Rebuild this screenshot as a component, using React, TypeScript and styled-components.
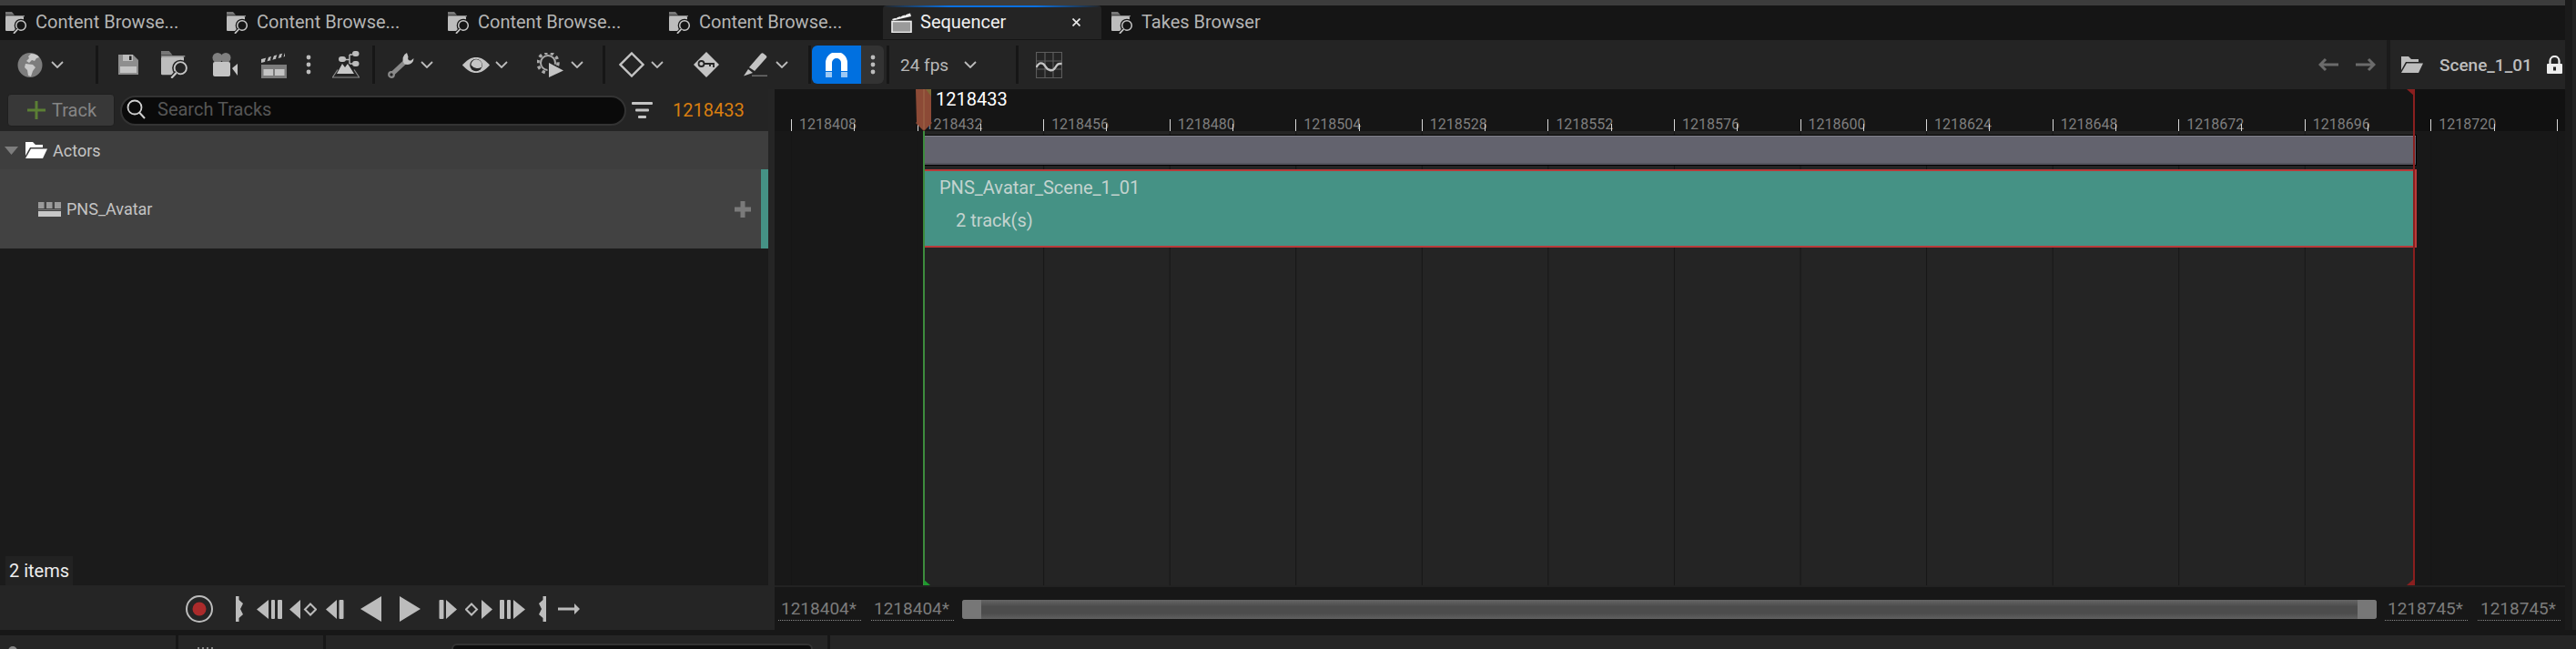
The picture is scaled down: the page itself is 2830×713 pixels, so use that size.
import React from "react";
import styled, { createGlobalStyle } from "styled-components";

const Global = createGlobalStyle`
  html, body { margin: 0; padding: 0; background: #1b1b1b; overflow: hidden; }
  * { box-sizing: border-box; }
`;

const ICON = "#bcbcbc";

const Page = styled.div`
  width: 2830px; height: 713px; overflow: hidden; display: flex; flex-direction: column;
  font-family: Roboto, "Liberation Sans", sans-serif; font-size: 20px; color: #bdbdbd; background: #1b1b1b;
`;
const Upper = styled.div`display: flex; height: 692px;`;
const Content = styled.div`width: 2818px; display: flex; flex-direction: column;`;
const Rail = styled.div`flex: 1; border-left: 8px solid #1a1a1a; background: #232323;`;
const TopEdge = styled.div`height: 6px; background: #3c3c3c;`;

const TabBar = styled.div`height: 38px; background: #151515; display: flex;`;
const Tab = styled.div<{ $w: number; $pad?: number }>`
  width: ${p => p.$w}px; padding: 0 0 0 ${p => p.$pad ?? 6}px; display: flex; align-items: center; gap: 9px;
  font-size: 20px; line-height: 24px; color: #b4b4b4; height: 37px; white-space: nowrap;
`;
const TabLabel = styled.span`position: relative; top: -1px;`;
const ActiveTab = styled(Tab)`
  background: #242424; color: #f0f0f0; position: relative; border-radius: 4px 4px 0 0;
  &::before {
    content: ""; position: absolute; left: 0; right: 0; top: 0; height: 2px;
    background: linear-gradient(90deg, transparent, #0a70e0 30%, #0a70e0 70%, transparent);
  }
`;
const CloseIcon = styled.svg`position: absolute; left: 208px; top: 14px;`;

const ToolRow = styled.div`height: 54px; display: flex; gap: 4px;`;
const Toolbar = styled.div`width: 2622px; background: #242424; display: flex; align-items: center; padding: 0 12px 0 19px;`;
const Crumbs = styled.div`flex: 1; background: #242424; display: flex; align-items: center; padding-left: 12px;`;
const CrumbName = styled.span`font-weight: 500; font-size: 19px; color: #bdbdbd; margin-left: 18px; width: 118px; white-space: nowrap;`;
const Ico = styled.svg<{ $ml?: number }>`margin-left: ${p => p.$ml ?? 0}px; flex: none; display: block;`;
const Sep = styled.div<{ $ml: number }>`margin-left: ${p => p.$ml}px; width: 3px; height: 42px; background: #161616; flex: none;`;
const Snap = styled.div`margin-left: 1px; height: 42px; display: flex; flex: none; border-radius: 6px; overflow: hidden;`;
const SnapOn = styled.div`width: 54px; background: #0070e0; display: flex; align-items: center; justify-content: center;`;
const SnapMenu = styled.div`width: 25px; background: #333; display: flex; align-items: center; justify-content: center;`;
const Fps = styled.span`margin-left: 12px; font-size: 19px; color: #b8b8b8; width: 55px; white-space: nowrap;`;
const Push = styled.div`flex: 1;`;

const Body = styled.div`flex: 1; display: flex; min-height: 0;`;
const Left = styled.div`width: 851px; display: flex; flex-direction: column; border-right: 7px solid #252525;`;
const SearchRow = styled.div`height: 46px; background: #242424; display: flex; align-items: center; padding-left: 8px; flex: none;`;
const TrackBtn = styled.div`
  width: 118px; height: 36px; background: #383838; border: 1px solid #1f1f1f; border-radius: 4px;
  display: flex; align-items: center; padding-left: 21px; gap: 7px; color: #858585; font-size: 20px;
`;
const SearchBox = styled.div`
  margin-left: 6px; width: 556px; height: 33px; border-radius: 17px; background: #0a0a0a; border: 2px solid #333;
  display: flex; align-items: center; padding: 0 0 2px 4px; gap: 11px; color: #565656; font-size: 20px;
`;
const Frame = styled.span`margin-left: 22px; color: #d97e10; font-size: 20px;`;
const FolderRow = styled.div`height: 42px; background: #3e3e3e; display: flex; align-items: center; padding-left: 5px; flex: none; font-size: 18px; color: #c4c4c4;`;
const FolderName = styled.span`margin-left: 6px;`;
const ActorRow = styled.div`
  height: 87px; background: #424242; display: flex; align-items: center; padding-left: 42px; flex: none;
  font-size: 18px; color: #c4c4c4; border-right: 8px solid #459285; padding-right: 11px;
`;
const ActorName = styled.span`margin-left: 6px; flex: 1;`;
const Empty = styled.div`flex: 1; background: #1b1b1b; display: flex; align-items: flex-end; padding-left: 6px;`;
const Items = styled.div`width: 74px; height: 32px; background: #222; color: #eee; font-size: 20px; line-height: 32px; padding-left: 4px; white-space: nowrap;`;

const Right = styled.div`flex: 1; position: relative; display: flex; flex-direction: column;`;
const Ruler = styled.div`
  height: 46px; flex: none; display: flex; padding-left: 18px;
  background: linear-gradient(90deg, #151515 0 1801px, #111 1801px);
`;
const RulerCell = styled.div`
  width: 138.57px; flex: none; height: 100%; position: relative; display: flex; align-items: flex-end;
  padding-left: 9px; color: #7e7e7e; font-size: 16px; line-height: 15px;
  &::before { content: ""; position: absolute; left: 0; bottom: 0; width: 1px; height: 13px; background: #d8d8d8; }
  &::after { content: ""; position: absolute; left: 69.3px; bottom: 0; width: 1px; height: 8px; background: #d8d8d8; }
`;
const RulerEnd = styled.div`width: 1px; height: 13px; align-self: flex-end; background: #d8d8d8; flex: none;`;
const Tracks = styled.div`
  flex: 1; padding-top: 4px; display: flex; flex-direction: column; gap: 4px;
  background:
    linear-gradient(90deg, #161616 0 1px, transparent 1px) 18px 0 / 138.57px 100% repeat-x,
    linear-gradient(90deg, #181818 0 164px, #242424 164px 1801px, #181818 1801px);
`;
const FolderBar = styled.div`
  margin-left: 164px; width: 1640px; height: 34px; background: #63636e;
  border: 1px solid #000; border-left: 0; box-shadow: inset 0 1px 0 #83838c, inset 0 -2px 0 #55555e;
  flex: none;
`;
const Clip = styled.div`
  margin-left: 164px; width: 1640px; height: 86px; background: #459285;
  border: 2px solid #b83a3a; border-left: 0;
  padding: 6px 0 0 17px; color: #c3d3cf; font-size: 20px; line-height: 24px; flex: none;
  display: flex; flex-direction: column; gap: 12px;
`;
const ClipSub = styled.div`margin-left: 18px;`;
const PlayHead = styled.svg`position: absolute; left: 154px; top: 0;`;
const PlayFrame = styled.div`position: absolute; left: 177px; top: 0; color: #fff; font-size: 20px; line-height: 22px;`;
const GreenLine = styled.div`position: absolute; left: 163px; top: 46px; bottom: 0; width: 2px; background: #3d8b3d;`;
const RedLine = styled.div`position: absolute; left: 1800px; top: 0; bottom: 0; width: 2px; background: #8a1f1f;`;
const Corner = styled.svg<{ $x: number; $bottom?: boolean }>`
  position: absolute; left: ${p => p.$x}px; ${p => (p.$bottom ? "bottom: 0;" : "top: 0;")}
`;

const BottomRow = styled.div`height: 49px; display: flex; flex: none;`;
const Transport = styled.div`width: 851px; background: #252525; display: flex; align-items: center; padding: 3px 0 0 204px;`;
const RangeBar = styled.div`
  flex: 1; background: #171717; border-top: 2px solid #222; display: flex; align-items: flex-start;
  padding: 13px 5px 0 4px;
`;
const Num = styled.div<{ $ml?: number }>`
  width: 91px; margin-left: ${p => p.$ml ?? 0}px; height: 24px; line-height: 22px; font-size: 19px; color: #7c7c7c;
  border-bottom: 1px dotted #8a8a8a; padding-left: 3px; white-space: nowrap; flex: none;
`;
const Scroll = styled.div`
  flex: 1; margin: 1px 9px 0 9px; height: 21px; border-radius: 3px; overflow: hidden; display: flex; justify-content: space-between;
  background: linear-gradient(180deg, #666 0, #4c4c4c 35%, #4c4c4c 70%, #606060 100%);
`;
const ScrollCap = styled.div`width: 21px; background: #777;`;

const Gutter = styled.div`height: 6px; background: #171717; flex: none;`;
const Footer = styled.div`flex: 1; display: flex; background: #252525; overflow: hidden;`;
const FootCell = styled.div<{ $w: number }>`
  width: ${p => p.$w}px; flex: none; border-right: 3px solid #171717; position: relative; display: flex; padding-top: 9px;
`;
const FootInput = styled.div`
  margin-left: 138px; width: 397px; height: 20px; background: #0d0d0d; border: 2px solid #333; border-radius: 6px 6px 0 0;
`;
const FootDot = styled.div`margin-left: 9px; margin-top: 3px; width: 10px; height: 10px; border-radius: 50%; background: #888;`;
const FootBars = styled.div`margin-left: 21px; margin-top: 4px; width: 18px; height: 8px; background: repeating-linear-gradient(90deg, #888 0 2px, transparent 2px 5px);`;

type P = { ml?: number };
const Chevron = ({ ml }: P) => (
  <Ico $ml={ml} width={14} height={8} viewBox="0 0 14 8"><path d="M1 1l6 6 6-6" fill="none" stroke={ICON} strokeWidth={1.8} /></Ico>
);
const FolderSearch = ({ size = 24, ml, bg = "#151515" }: P & { size?: number; bg?: string }) => (
  <Ico $ml={ml} width={size} height={size} viewBox="0 0 24 24">
    <path d="M0 0h7l3 3.5H0z" fill="#777" />
    <rect y="4" width="21" height="1.2" fill="#8a8a8a" />
    <rect y="5" width="20" height="16" rx="1" fill="#bdbdbd" />
    <circle cx="17" cy="15" r="7.3" fill={bg} />
    <circle cx="17" cy="15" r="5.3" fill="none" stroke="#c8c8c8" strokeWidth="1.5" />
    <path d="M13.5 19l-4.500 5" stroke={bg} strokeWidth="4" />
    <path d="M13.500 19l-4.500 4.800" stroke="#c8c8c8" strokeWidth="1.800" />
  </Ico>
);
const Clapper = () => (
  <Ico width={23} height={23} viewBox="0 0 23 23">
    <path d="M1 8L21 1.5l1 3.5L2 9.5z" fill="#eee" />
    <path d="M5 6.8l2-2.6M10 5.2l2-2.6M15 3.6l2-2.6" stroke="#222" strokeWidth="1.6" />
    <rect x="1" y="10.5" width="21" height="12" fill="#9a9a9a" stroke="#eee" strokeWidth="1.6" />
  </Ico>
);
const FolderOpen = ({ color, ml }: P & { color: string }) => (
  <Ico $ml={ml} width={24} height={18} viewBox="0 0 24 18">
    <path d="M0 0h8l3 3h8v3H5L0 15z" fill={color} />
    <path d="M6 7.5h18L19 18H0z" fill={color} />
  </Ico>
);

const Globe = () => (
  <Ico width={28} height={27} viewBox="0 0 28 27">
    <circle cx="14" cy="13.5" r="13.5" fill="#7d7d7d" />
    <path d="M15 1c4 0 7 1 9 4l-3 1-2 3-3-1-3 3-3-2 3-3-1-2zM9 12l8 1 3 3-3 4-2 6-3-1-1-6-3-3z" fill="#c9c9c9" />
  </Ico>
);
const Save = ({ ml }: P) => (
  <Ico $ml={ml} width={22} height={22} viewBox="0 0 22 22">
    <path d="M0 0h16l6 6v16H0z" fill="#8e8e8e" />
    <rect x="2" y="13" width="18" height="7" fill="#c4c4c4" />
    <rect x="5" y="0" width="11" height="7" fill="#bdbdbd" />
    <rect x="12" y="1.5" width="2.5" height="4.5" fill="#242424" />
  </Ico>
);
const Camera = ({ ml }: P) => (
  <Ico $ml={ml} width={28} height={26} viewBox="0 0 28 26">
    <circle cx="6" cy="5.5" r="5.5" fill="#808080" /><circle cx="15" cy="5.5" r="5.5" fill="#808080" />
    <rect x="1" y="10" width="19" height="16" rx="2" fill="#c4c4c4" />
    <path d="M22 17l6-5v13z" fill="#c4c4c4" />
  </Ico>
);
const ClapperTool = ({ ml }: P) => (
  <Ico $ml={ml} width={29} height={29} viewBox="0 0 29 29">
    <path d="M1 8L27 1v4L1 12z" fill="#bdbdbd" />
    <path d="M6 11l2-6M12 9l2-6M18 8l2-6M24 6l2-6" stroke="#242424" strokeWidth="2.4" />
    <rect x="1" y="14" width="28" height="15" fill="#7c7c7c" />
    <rect x="3.5" y="19" width="10.5" height="7" fill="#c4c4c4" /><rect x="16" y="19" width="10.5" height="7" fill="#c4c4c4" />
  </Ico>
);
const Dots = ({ ml }: P) => (
  <Ico $ml={ml} width={6} height={22} viewBox="0 0 6 22">
    <circle cx="3" cy="3" r="2.4" fill={ICON} /><circle cx="3" cy="11" r="2.4" fill={ICON} /><circle cx="3" cy="19" r="2.4" fill={ICON} />
  </Ico>
);
const Tree = ({ ml }: P) => (
  <Ico $ml={ml} width={30} height={30} viewBox="0 0 30 30">
    <path d="M14 9.5h5M19 4v10M19 4h3M19 14h3" stroke="#bdbdbd" strokeWidth="1.4" fill="none" />
    <rect x="7" y="6" width="8" height="6" rx="3" fill="#bdbdbd" />
    <rect x="22" y="0" width="7.5" height="6" rx="3" fill="#bdbdbd" /><rect x="22" y="11" width="7.5" height="6" rx="3" fill="#bdbdbd" />
    <path d="M5 25l6-11 3 4 3-4 7 11z" fill="#c8c8c8" />
    <path d="M0 29.5l6-9M30 29.5l-6-9M0 29h30" stroke="#8a8a8a" strokeWidth="1.2" fill="none" />
  </Ico>
);
const Wrench = ({ ml }: P) => (
  <Ico $ml={ml} width={29} height={29} viewBox="0 0 29 29">
    <path d="M4 25L19 11" stroke="#8a8a8a" strokeWidth="5" />
    <circle cx="4" cy="25" r="2.8" fill="#242424" stroke="#8a8a8a" strokeWidth="2.2" />
    <path d="M21 1a8 8 0 0 0-3 12c3 2 8 1 10-3l.5-3-3 2.5c-3 .5-4-2-3-4z" fill="#c4c4c4" />
  </Ico>
);
const Eye = ({ ml }: P) => (
  <Ico $ml={ml} width={30} height={17} viewBox="0 0 30 17">
    <path d="M0 8.5C5 2.5 10 0 15 0s10 2.5 15 8.5C25 14.5 20 17 15 17S5 14.5 0 8.5z" fill="#c4c4c4" />
    <circle cx="15" cy="8.5" r="6.8" fill="#242424" />
    <path d="M9.5 8.5a6 6 0 1 1 11.5 2.2A9 9 0 0 1 9.5 8.5z" fill="#c4c4c4" />
  </Ico>
);
const GearPlay = ({ ml }: P) => (
  <Ico $ml={ml} width={29} height={27} viewBox="0 0 29 27">
    <circle cx="12" cy="11" r="8" fill="none" stroke="#aaa" strokeWidth="2" />
    <circle cx="12" cy="11" r="11" fill="none" stroke="#aaa" strokeWidth="3.4" strokeDasharray="3.4 3.4" />
    <path d="M13 11v16l16-7.5z" fill="#242424" stroke="#242424" strokeWidth="3" />
    <path d="M13 11v16l16-7.5z" fill="#c4c4c4" />
  </Ico>
);
const Diamond = ({ ml }: P) => (
  <Ico $ml={ml} width={28} height={28} viewBox="0 0 28 28">
    <path d="M14 1.5L26.5 14 14 26.5 1.5 14z" fill="none" stroke="#c4c4c4" strokeWidth="2.4" />
  </Ico>
);
const KeyDiamond = ({ ml }: P) => (
  <Ico $ml={ml} width={28} height={28} viewBox="0 0 28 28">
    <path d="M14 0l14 14-14 14L0 14z" fill="#c4c4c4" />
    <circle cx="8.5" cy="13" r="3" fill="none" stroke="#242424" strokeWidth="1.8" />
    <path d="M11.5 13H22v4M18 13v3" stroke="#242424" strokeWidth="1.8" fill="none" />
  </Ico>
);
const Pencil = ({ ml }: P) => (
  <Ico $ml={ml} width={26} height={26} viewBox="0 0 26 26">
    <path d="M6 16L19 1a2 2 0 0 1 3 0l2.5 2a2 2 0 0 1 0 3L12 20z" fill="#c4c4c4" />
    <path d="M5 18l5 4-10 3.5z" fill="#c4c4c4" />
    <rect x="9" y="24.5" width="17" height="1.5" fill="#6e6e6e" />
  </Ico>
);
const Magnet = () => (
  <Ico width={24} height={27} viewBox="0 0 24 27">
    <path d="M3.5 20V11a8.500 8.500 0 0 1 17 0v9" fill="none" stroke="#fff" strokeWidth="7" />
    <rect x="0" y="21" width="7" height="6" fill="#9cc8f4" /><rect x="17" y="21" width="7" height="6" fill="#9cc8f4" />
  </Ico>
);
const Graph = ({ ml }: P) => (
  <Ico $ml={ml} width={29} height={29} viewBox="0 0 29 29">
    <path d="M.5.5h28v28H.5zM10 .5v28M19 .5v28M.5 10h28M.5 19h28" fill="none" stroke="#5c5c5c" strokeWidth="1.2" />
    <path d="M.5 17c3-6 7-6 10-1s8 6 11 1 4-4 7-4" fill="none" stroke="#c4c4c4" strokeWidth="2.4" />
  </Ico>
);
const Arrow = ({ ml, flip }: P & { flip?: boolean }) => (
  <Ico $ml={ml} width={23} height={16} viewBox="0 0 23 16">
    <path d={flip ? "M22 8H2M8 2L2 8l6 6" : "M1 8h20M15 2l6 6-6 6"} fill="none" stroke="#6b6b6b" strokeWidth="3" />
  </Ico>
);
const SearchGlyph = () => (
  <Ico width={24} height={22} viewBox="0 0 24 22">
    <circle cx="10" cy="9" r="7.5" fill="none" stroke="#d0d0d0" strokeWidth="1.8" />
    <path d="M15 14.500l6 6.500" stroke="#d0d0d0" strokeWidth="2" />
  </Ico>
);
const Plus = ({ size, thick, color }: { size: number; thick: number; color: string }) => (
  <Ico width={size} height={size} viewBox={`0 0 ${size} ${size}`}>
    <rect x={(size - thick) / 2} width={thick} height={size} fill={color} />
    <rect y={(size - thick) / 2} width={size} height={thick} fill={color} />
  </Ico>
);
const Filter = ({ ml }: P) => (
  <Ico $ml={ml} width={23} height={18} viewBox="0 0 23 18">
    <rect width="23" height="3" rx="1" fill="#c4c4c4" /><rect x="4" y="7.500" width="15" height="3" rx="1" fill="#c4c4c4" /><rect x="7" y="15" width="9" height="3" rx="1" fill="#c4c4c4" />
  </Ico>
);
const Lock = ({ ml }: P) => (
  <Ico $ml={ml} width={17} height={20} viewBox="0 0 17 20">
    <path d="M3.500 9V6a5 5 0 0 1 10 0v3" fill="none" stroke="#eee" strokeWidth="2.2" />
    <rect y="9" width="17" height="11" rx="1" fill="#eee" /><rect x="7" y="12.500" width="3" height="4" fill="#242424" />
  </Ico>
);
const TrackGlyph = () => (
  <Ico width={25} height={16} viewBox="0 0 25 16">
    <rect width="6.500" height="7" fill="#9a9a9a" /><rect x="9" width="6.500" height="7" fill="#9a9a9a" /><rect x="18" width="7" height="7" fill="#9a9a9a" />
    <rect y="8" width="25" height="1" fill="#777" /><rect y="10" width="25" height="6" fill="#c8c8c8" />
  </Ico>
);
const Disclosure = () => (
  <Ico width={15} height={9} viewBox="0 0 15 9"><path d="M0 0h15L7.500 9z" fill="#7d7d7d" /></Ico>
);

const T = "#bcbcbc";
const Record = () => (
  <Ico width={30} height={30} viewBox="0 0 30 30">
    <circle cx="15" cy="15" r="14" fill="none" stroke={T} strokeWidth="2" /><circle cx="15" cy="15" r="7.500" fill="#ab2b2b" />
  </Ico>
);
const Bracket = ({ ml, flip }: P & { flip?: boolean }) => (
  <Ico $ml={ml} width={8} height={28} viewBox="0 0 8 28">
    <path d={flip ? "M8 0H4.500v4L0 8l3 6-3 6 4.500 4v4H8z" : "M0 0h3.500v4L8 8l-3 6 3 6-4.500 4v4H0z"} fill={T} />
  </Ico>
);
const StepEnd = ({ ml, flip }: P & { flip?: boolean }) => (
  <Ico $ml={ml} width={29} height={21} viewBox="0 0 29 21">
    <g transform={flip ? "translate(29 0) scale(-1 1)" : undefined}>
      <path d="M0 10.500L13 0v21z" fill={T} /><rect x="16" width="4" height="21" rx="1" fill={T} /><rect x="23" width="5" height="21" rx="1" fill={T} />
    </g>
  </Ico>
);
const KeyStep = ({ ml, flip }: P & { flip?: boolean }) => (
  <Ico $ml={ml} width={30} height={21} viewBox="0 0 30 21">
    <g transform={flip ? "translate(30 0) scale(-1 1)" : undefined}>
      <path d="M0 10.500L12 0v21z" fill={T} /><path d="M23 4.500l6 6-6 6-6-6z" fill="none" stroke={T} strokeWidth="2" />
    </g>
  </Ico>
);
const Step = ({ ml, flip }: P & { flip?: boolean }) => (
  <Ico $ml={ml} width={20} height={21} viewBox="0 0 20 21">
    <g transform={flip ? "translate(20 0) scale(-1 1)" : undefined}>
      <path d="M0 10.500L12 0v21z" fill={T} /><rect x="14.500" width="5" height="21" rx="1" fill={T} />
    </g>
  </Ico>
);
const Play = ({ ml, flip }: P & { flip?: boolean }) => (
  <Ico $ml={ml} width={23} height={28} viewBox="0 0 23 28">
    <path d={flip ? "M0 14L23 0v28z" : "M23 14L0 0v28z"} fill={T} />
  </Ico>
);
const TransportArrow = ({ ml }: P) => (
  <Ico $ml={ml} width={24} height={12} viewBox="0 0 24 12">
    <path d="M0 4.500h18V0l6 6-6 6V7.500H0z" fill={T} />
  </Ico>
);

const labels = Array.from({ length: 14 }, (_, i) => 1218408 + i * 24);

export default function App() {
  return (
    <Page>
      <Global />
      <Upper>
        <Content>
          <TopEdge />
          <TabBar>
            {[243, 243, 243, 241].map((w, i) => (
              <Tab key={i} $w={w}><FolderSearch /><TabLabel>Content Browse...</TabLabel></Tab>
            ))}
            <ActiveTab $w={240} $pad={9}>
              <Clapper /><TabLabel>Sequencer</TabLabel>
              <CloseIcon width={9} height={9} viewBox="0 0 9 9"><path d="M.5.5l8 8M8.500.5l-8 8" stroke="#e8e8e8" strokeWidth="1.700" /></CloseIcon>
            </ActiveTab>
            <Tab $w={300} $pad={11}><FolderSearch /><TabLabel>Takes Browser</TabLabel></Tab>
          </TabBar>
          <ToolRow>
            <Toolbar>
              <Globe /><Chevron ml={9} /><Sep $ml={35} />
              <Save ml={22} /><FolderSearch size={30} ml={25} bg="#242424" /><Camera ml={26} /><ClapperTool ml={25} />
              <Dots ml={21} /><Tree ml={23} /><Sep $ml={14} />
              <Wrench ml={14} /><Chevron ml={7} /><Eye ml={32} /><Chevron ml={6} /><GearPlay ml={32} /><Chevron ml={8} /><Sep $ml={21} />
              <Diamond ml={15} /><Chevron ml={7} /><KeyDiamond ml={33} /><Pencil ml={27} /><Chevron ml={9} /><Sep $ml={22} />
              <Snap>
                <SnapOn><Magnet /></SnapOn>
                <SnapMenu><Dots /></SnapMenu>
              </Snap>
              <Sep $ml={3} />
              <Fps>24 fps</Fps><Chevron ml={15} /><Sep $ml={43} /><Graph ml={19} />
              <Push />
              <Arrow flip /><Arrow ml={17} />
            </Toolbar>
            <Crumbs>
              <FolderOpen color="#bdbdbd" />
              <CrumbName>Scene_1_01</CrumbName>
              <Lock />
            </Crumbs>
          </ToolRow>
          <Body>
            <Left>
              <SearchRow>
                <TrackBtn><Plus size={20} thick={3} color="#5b7f34" />Track</TrackBtn>
                <SearchBox><SearchGlyph />Search Tracks</SearchBox>
                <Filter ml={6} />
                <Frame>1218433</Frame>
              </SearchRow>
              <FolderRow><Disclosure /><FolderOpen color="#fff" ml={8} /><FolderName>Actors</FolderName></FolderRow>
              <ActorRow>
                <TrackGlyph /><ActorName>PNS_Avatar</ActorName>
                <Plus size={18} thick={5} color="#7a7a7a" />
              </ActorRow>
              <Empty><Items>2 items</Items></Empty>
            </Left>
            <Right>
              <Ruler>
                {labels.map(n => <RulerCell key={n}>{n}</RulerCell>)}
                <RulerEnd />
              </Ruler>
              <Tracks>
                <FolderBar />
                <Clip>
                  PNS_Avatar_Scene_1_01
                  <ClipSub>2 track(s)</ClipSub>
                </Clip>
              </Tracks>
              <GreenLine />
              <RedLine />
              <Corner $x={1793} width={9} height={8} viewBox="0 0 9 8"><path d="M0 0h9v8z" fill="#8a1f1f" /></Corner>
              <Corner $x={1793} $bottom width={9} height={8} viewBox="0 0 9 8"><path d="M9 0v8H0z" fill="#8a1f1f" /></Corner>
              <Corner $x={164} $bottom width={7} height={6} viewBox="0 0 7 6"><path d="M0 0v6h7z" fill="#1e9a2e" /></Corner>
              <PlayHead width={20} height={46} viewBox="0 0 20 46">
                <path d="M1 0h17v36l1 1-9 9-9-9 1-1z" fill="#8c4a36" />
                <path d="M12 0h6v8z" fill="#7d6a35" />
                <rect x="9.500" width="1" height="44" fill="#a06a4a" />
              </PlayHead>
              <PlayFrame>1218433</PlayFrame>
            </Right>
          </Body>
          <BottomRow>
            <Transport>
              <Record /><Bracket ml={25} /><StepEnd ml={15} /><KeyStep ml={7} /><Step ml={10} />
              <Play ml={18} flip /><Play ml={20} /><Step ml={20} flip /><KeyStep ml={9} flip /><StepEnd ml={7} flip />
              <Bracket ml={15} flip /><TransportArrow ml={13} />
            </Transport>
            <RangeBar>
              <Num>1218404*</Num><Num $ml={11}>1218404*</Num>
              <Scroll><ScrollCap /><ScrollCap /></Scroll>
              <Num>1218745*</Num><Num $ml={11}>1218745*</Num>
            </RangeBar>
          </BottomRow>
        </Content>
        <Rail />
      </Upper>
      <Gutter />
      <Footer>
        <FootCell $w={196}><FootDot /></FootCell>
        <FootCell $w={162}><FootBars /></FootCell>
        <FootCell $w={554}><FootInput /></FootCell>
      </Footer>
    </Page>
  );
}
